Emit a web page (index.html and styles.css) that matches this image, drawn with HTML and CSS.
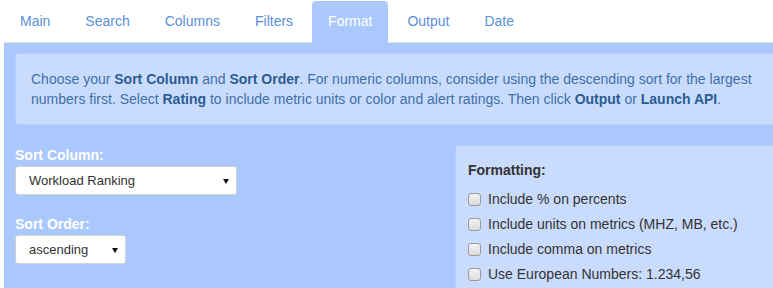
FILE: index.html
```html
<!DOCTYPE html>
<html lang="en">
<head>
    <meta charset="UTF-8">
    <meta name="viewport" content="width=device-width, initial-scale=1.0">
    <title>Report Builder - Format</title>
    <link rel="stylesheet" href="styles.css">
</head>
<body>
    <div class="panel">
        <ul class="nav-tabs">
            <li><a href="#">Main</a></li>
            <li><a href="#">Search</a></li>
            <li><a href="#">Columns</a></li>
            <li><a href="#">Filters</a></li>
            <li class="active"><a href="#">Format</a></li>
            <li><a href="#">Output</a></li>
            <li><a href="#">Date</a></li>
        </ul>

        <div class="tab-content">
            <div class="alert">
                <p>Choose your <b>Sort Column</b> and <b>Sort Order</b>. For numeric columns, consider using the descending sort for the largest numbers first. Select <b>Rating</b> to include metric units or color and alert ratings. Then click <b>Output</b> or <b>Launch API</b>.</p>
            </div>

            <div class="row">
                <div class="col-left">
                    <div class="form-group">
                        <label for="sort-column">Sort Column:</label>
                        <div class="select-wrap select-wide">
                            <select id="sort-column">
                                <option>Workload Ranking</option>
                                <option>Name</option>
                                <option>CPU Usage</option>
                            </select>
                        </div>
                    </div>
                    <div class="form-group">
                        <label for="sort-order">Sort Order:</label>
                        <div class="select-wrap select-narrow">
                            <select id="sort-order">
                                <option>ascending</option>
                                <option>descending</option>
                            </select>
                        </div>
                    </div>
                </div>

                <div class="col-right">
                    <div class="well">
                        <h4>Formatting:</h4>
                        <label class="check"><input type="checkbox"> Include % on percents</label>
                        <label class="check"><input type="checkbox"> Include units on metrics (MHZ, MB, etc.)</label>
                        <label class="check"><input type="checkbox"> Include comma on metrics</label>
                        <label class="check"><input type="checkbox"> Use European Numbers: 1.234,56</label>
                    </div>
                </div>
            </div>
        </div>
    </div>
</body>
</html>
```

FILE: styles.css
```css
body {
    margin: 0;
    font-family: "Liberation Sans", Arial, sans-serif;
    font-size: 14px;
    line-height: 20px;
    color: #333;
    background-color: #fff;
    overflow: hidden;
}

.panel {
    margin-left: 4px;
    width: 814px;
}

.nav-tabs {
    display: flex;
    list-style: none;
    margin: 0;
    padding: 0;
    height: 42px;
    border-bottom: 1px solid #dedede;
}

.nav-tabs li {
    margin-right: 3px;
}

.nav-tabs a {
    display: block;
    margin-top: 1px;
    height: 41px;
    padding: 0 16px 1px;
    line-height: 41px;
    color: #5b8fd8;
    text-decoration: none;
    border-radius: 4px 4px 0 0;
}

.nav-tabs li.active a {
    background: #abc8fd;
    color: #fff;
}

.tab-content {
    background: #abc8fd;
    padding: 10px 11px 20px;
    box-sizing: border-box;
    width: 100%;
    min-height: 260px;
}

.alert {
    background: #cadcfd;
    border: 1px solid #b9cffb;
    border-radius: 4px;
    padding: 15px;
    margin-bottom: 20px;
    color: #3e70a8;
}

.alert p {
    margin: 0;
}

.alert b {
    color: #2b5c92;
}

.row {
    display: flex;
}

.col-left {
    width: 440px;
    flex-shrink: 0;
}

.col-right {
    flex: 1;
}

.form-group {
    margin-bottom: 19px;
}

.form-group label {
    display: block;
    color: #fff;
    font-weight: bold;
    margin-bottom: 1px;
}

.select-wrap {
    position: relative;
}

.select-wrap::after {
    content: "";
    position: absolute;
    right: 8px;
    top: 13px;
    border-left: 3px solid transparent;
    border-right: 3px solid transparent;
    border-top: 5px solid #111;
    pointer-events: none;
}

.select-wide {
    width: 222px;
}

.select-narrow {
    width: 111px;
}

.select-wrap select {
    appearance: none;
    -webkit-appearance: none;
    display: block;
    width: 100%;
    height: 29px;
    padding: 0 20px 0 13px;
    border: 1px solid #d3d3d3;
    border-radius: 3px;
    background: #fff;
    font-family: inherit;
    font-size: 13px;
    color: #333;
}

.well {
    background: #cadcfd;
    border: 1px solid #b9cffb;
    border-radius: 4px;
    padding: 14px 12px 20px;
}

.well h4 {
    margin: 0 0 9px;
    font-size: 14px;
    font-weight: bold;
    color: #333;
}

.check {
    display: flex;
    align-items: center;
    height: 20px;
    margin-bottom: 5px;
    color: #333;
}

.check input {
    appearance: none;
    -webkit-appearance: none;
    width: 13px;
    height: 13px;
    margin: 0 7px 0 0;
    border: 1px solid #9a9a9a;
    border-radius: 3px;
    background: linear-gradient(#f2f2f2, #dcdcdc);
    box-sizing: border-box;
}
```
